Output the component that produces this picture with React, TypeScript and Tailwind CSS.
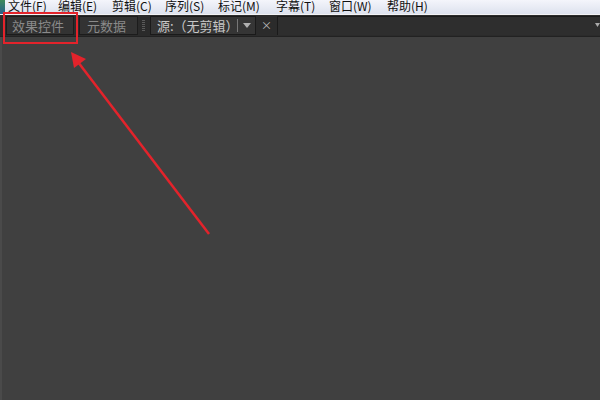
const menuItems: [string, string][] = [
  ['文件(F)', 'w-[50px]'],
  ['编辑(E)', 'w-[54px]'],
  ['剪辑(C)', 'w-[53px]'],
  ['序列(S)', 'w-[53px]'],
  ['标记(M)', 'w-[58px]'],
  ['字幕(T)', 'w-[53px]'],
  ['窗口(W)', 'w-[58px]'],
  ['帮助(H)', 'w-[58px]'],
];

export default function App() {
  return (
    <div className="relative w-[600px] h-[400px] overflow-hidden bg-[#404040] font-['Noto_Sans_CJK_SC','Liberation_Sans',sans-serif]">
      {/* Menu bar (top slightly clipped, as in the window) */}
      <div className="flex h-[14px] overflow-hidden bg-gradient-to-b from-[#f4f5fb] to-[#dde2ee]">
        <div className="w-[5px] h-full bg-gradient-to-b from-[#3f8a5a] to-[#2a5f8a]" />
        <div className="flex pl-[3px] -mt-[2px]">
          {menuItems.map(([label, w]) => (
            <span key={label} className={`${w} shrink-0 text-[12px] leading-[16px] text-[#111]`}>
              {label}
            </span>
          ))}
        </div>
      </div>
      <div className="h-px bg-[#f2f2f4]" />

      {/* Tab strip */}
      <div className="flex items-center h-[22px] bg-[#2b2b2b] border-b border-[#222]">
        <div className="ml-[6px] w-[68px] h-[19px] flex items-center pl-[5px] bg-[#333] border border-[#1c1c1c] text-[13px] leading-none text-[#8a8a8a]">
          效果控件
        </div>
        <div className="ml-[5px] w-[59px] h-[19px] flex items-center pl-[7px] bg-[#333] border border-[#1c1c1c] text-[13px] leading-none text-[#8a8a8a]">
          元数据
        </div>
        <div className="ml-[4px] w-[4px] h-[12px] flex flex-col justify-between">
          {[0, 1, 2, 3, 4, 5].map((i) => (
            <div key={i} className="h-px w-[3px] bg-[#5a5a5a]" />
          ))}
        </div>
        <div className="ml-[4px] w-[106px] h-[19px] flex items-center bg-[#353535] border border-[#1a1a1a]">
          <span className="pl-[6px] text-[13px] leading-none text-[#c8c8c8]">源:（无剪辑）</span>
          <div className="ml-auto w-px h-[13px] bg-[#777]" />
          <div className="w-[17px] flex justify-center">
            <svg width="8" height="5" viewBox="0 0 8 5">
              <path d="M0 0 H8 L4 5 Z" fill="#b0b0b0" />
            </svg>
          </div>
        </div>
        <span className="ml-[5px] text-[11px] leading-none text-[#bbb]">×</span>
        <div className="ml-[5px] flex-1 h-[19px] bg-[#2e2e2e] border-l border-t border-[#1a1a1a] flex justify-end items-start pt-[6px]">
          <svg width="5" height="4" viewBox="0 0 5 4">
            <path d="M0 0 H5 L2.5 4 Z" fill="#aaa" />
          </svg>
        </div>
      </div>

      {/* Panel body */}
      <div className="h-full border-l-2 border-[#4a4a4a]" />

      {/* Annotation: red box */}
      <div className="absolute left-[3px] top-[12px] w-[75px] h-[32px] border-2 border-[#e3232b]" />

      {/* Annotation: arrow */}
      <svg className="absolute left-0 top-0" width="600" height="400" viewBox="0 0 600 400">
        <line x1="209" y1="234" x2="78" y2="62" stroke="#e3232b" strokeWidth="2.5" />
        <path d="M71 52 L86 59 L74 68 Z" fill="#e3232b" />
      </svg>
    </div>
  );
}
